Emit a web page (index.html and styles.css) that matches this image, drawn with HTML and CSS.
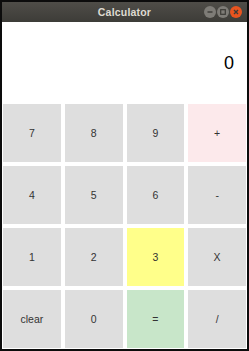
FILE: index.html
```html
<!DOCTYPE html>
<html>
<head>
<meta charset="utf-8">
<link rel="stylesheet" href="styles.css">
</head>
<body>
<div class="window">
  <div class="titlebar">
    <span class="title">Calculator</span>
    <div class="controls">
      <span class="ctl ctl-min"><svg width="12" height="12" viewBox="0 0 12 12"><line x1="3.5" y1="6" x2="8.5" y2="6" stroke="#3c3b37" stroke-width="1.4"/></svg></span>
      <span class="ctl ctl-max"><svg width="12" height="12" viewBox="0 0 12 12"><rect x="3.7" y="3.7" width="4.6" height="4.6" fill="none" stroke="#3c3b37" stroke-width="1.2"/></svg></span>
      <span class="ctl ctl-close"><svg width="12" height="12" viewBox="0 0 12 12"><path d="M4 4 L8 8 M8 4 L4 8" stroke="#3c3b37" stroke-width="1.4"/></svg></span>
    </div>
  </div>
  <div class="display"><span class="value">0</span></div>
  <div class="keys">
    <div class="key">7</div>
    <div class="key">8</div>
    <div class="key">9</div>
    <div class="key key-plus">+</div>
    <div class="key">4</div>
    <div class="key">5</div>
    <div class="key">6</div>
    <div class="key">-</div>
    <div class="key">1</div>
    <div class="key">2</div>
    <div class="key key-yellow">3</div>
    <div class="key">X</div>
    <div class="key">clear</div>
    <div class="key">0</div>
    <div class="key key-green">=</div>
    <div class="key">/</div>
  </div>
</div>
</body>
</html>
```
FILE: styles.css
```css
html, body {
  margin: 0;
  padding: 0;
  background: #000;
}
.window {
  width: 249px;
  height: 351px;
  box-sizing: border-box;
  border: 2px solid #0c0c0c;
  background: #fff;
  display: flex;
  flex-direction: column;
  font-family: "Liberation Sans", Arial, sans-serif;
}
.titlebar {
  height: 20px;
  flex: none;
  background: linear-gradient(#4f4d48, #3d3c38);
  display: flex;
  align-items: center;
  justify-content: center;
  position: relative;
}
.title {
  color: #dfdbd2;
  font-weight: bold;
  font-size: 10.5px;
  letter-spacing: 0.2px;
}
.controls {
  position: absolute;
  right: 5px;
  top: 4px;
  display: flex;
  gap: 1px;
}
.ctl {
  width: 12px;
  height: 12px;
  border-radius: 50%;
  display: flex;
  align-items: center;
  justify-content: center;
  background: #7e7c77;
}
.ctl svg { display: block; }
.ctl-close {
  background: #e9541f;
}
.display {
  height: 82px;
  flex: none;
  display: flex;
  align-items: center;
  justify-content: flex-end;
  padding-right: 13px;
}
.value {
  font-size: 18px;
  color: #000;
}
.keys {
  flex: 1;
  display: grid;
  grid-template-columns: repeat(4, 1fr);
  grid-template-rows: repeat(4, 1fr);
  gap: 4px;
  padding: 0 1px 1px 1px;
}
.key {
  background: #dedede;
  display: flex;
  align-items: center;
  justify-content: center;
  font-size: 10.5px;
  color: #333;
}
.key-plus { background: #fce9eb; }
.key-yellow { background: #ffff8a; }
.key-green { background: #c8e6c9; }
```
